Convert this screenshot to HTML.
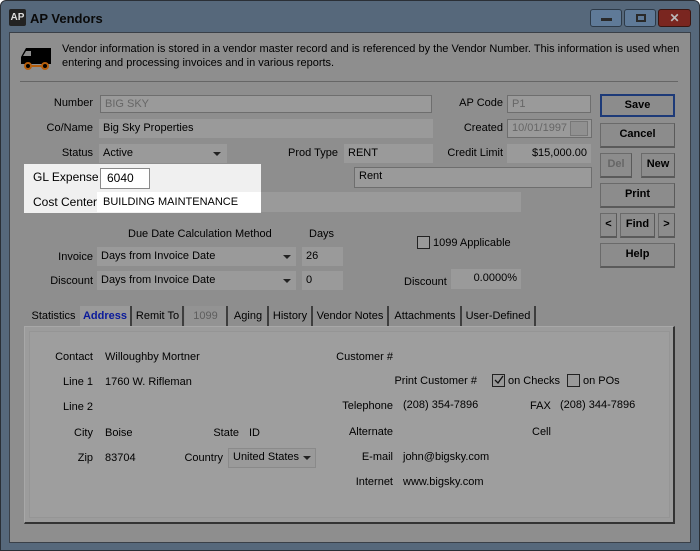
<!DOCTYPE html>
<html><head><meta charset="utf-8"><style>
*{margin:0;padding:0;box-sizing:border-box}
body{width:700px;height:551px;overflow:hidden;background:#fff;font-family:"Liberation Sans",sans-serif;font-size:11px;color:#000;position:relative}
div,span{position:absolute}
.frame{left:0;top:0;width:700px;height:551px;background:#56687b;border:1px solid #2a2f36;border-radius:6px 6px 0 0}
.content{left:9px;top:32px;width:682px;height:511px;background:#8e8e8e;border:1px solid #3a4048}
.l{white-space:nowrap;line-height:13px}
.r{text-align:right}
.f{background:#9a9a9a;height:19px;line-height:19px;padding-left:4px;white-space:nowrap}
.b{border:1px solid #6e6e6e;line-height:17px}
.btn{background:#8c8c8c;border:1px solid #6a6a6a;border-right-color:#5a5a5a;border-bottom:2px solid #5a5a5a;text-align:center;font-weight:bold;line-height:21px}
.arr{width:0;height:0;border-left:4px solid transparent;border-right:4px solid transparent;border-top:4px solid #222}
.tab{top:306px;height:20px;line-height:21px;text-align:center;border-right:2px solid #3e3e3e;white-space:nowrap}
.cb{width:13px;height:13px;border:1px solid #222;background:#9a9a9a}
</style></head><body>
<div class="frame"></div>
<div style="left:9px;top:9px;width:17px;height:17px;background:#222;border-radius:2px;color:#ddd;font-weight:bold;font-size:10px;line-height:17px;text-align:center">AP</div>
<div class="l" style="left:30px;top:12px;font-size:13px;font-weight:bold;color:#0a0a0a">AP Vendors</div>
<div style="left:590px;top:9px;width:32px;height:18px;background:#5f7a98;border:1px solid #2d3a48;border-radius:3px"><span style="left:10px;top:8px;width:11px;height:3px;background:#2a2a2a"></span></div>
<div style="left:624px;top:9px;width:32px;height:18px;background:#5f7a98;border:1px solid #2d3a48;border-radius:3px"><span style="left:11px;top:4px;width:10px;height:8px;border:2px solid #2a2a2a"></span></div>
<div style="left:658px;top:9px;width:33px;height:18px;background:#7a2620;border:1px solid #3a1510;border-radius:3px;color:#bbb;font-weight:bold;font-size:12px;text-align:center;line-height:16px">✕</div>
<div class="content"></div>
<svg style="position:absolute;left:19px;top:46px" width="34" height="26" viewBox="0 0 34 26"><path d="M12 2h20v16H2v-7l5-9z" fill="#000"/><path d="M7 5h5v5H4z" fill="#8e8e8e"/><circle cx="9" cy="20" r="3" fill="#000" stroke="#b55e0c" stroke-width="2"/><circle cx="26" cy="20" r="3" fill="#000" stroke="#b55e0c" stroke-width="2"/><path d="M13 20h9" stroke="#b55e0c" stroke-width="2"/></svg>
<div class="l" style="left:62px;top:43px;font-size:11px">Vendor information is stored in a vendor master record and is referenced by the Vendor Number. This information is used when</div>
<div class="l" style="left:62px;top:57px;font-size:11px">entering and processing invoices and in various reports.</div>
<div style="left:20px;top:81px;width:658px;height:1px;background:#666"></div>
<div class="l r" style="left:20px;width:73px;top:97px">Number</div>
<div class="f b" style="left:100px;top:95px;width:332px;height:18px;color:#666">BIG SKY</div>
<div class="l r" style="left:20px;width:73px;top:122px">Co/Name</div>
<div class="f" style="left:99px;top:119px;width:334px">Big Sky Properties</div>
<div class="l r" style="left:20px;width:73px;top:147px">Status</div>
<div class="f" style="left:99px;top:144px;width:128px">Active<span class="arr" style="left:114px;top:8px"></span></div>
<div class="l r" style="left:260px;width:78px;top:147px">Prod Type</div>
<div class="f" style="left:344px;top:144px;width:89px">RENT</div>
<div class="f b" style="left:354px;top:167px;width:238px;height:21px">Rent</div>
<div class="f" style="left:261px;top:192px;width:260px;height:20px"></div>
<div class="l r" style="left:440px;width:63px;top:97px">AP Code</div>
<div class="f b" style="left:507px;top:95px;width:84px;height:18px;color:#666">P1</div>
<div class="l r" style="left:440px;width:63px;top:122px">Created</div>
<div class="f b" style="left:507px;top:119px;width:85px;color:#666">10/01/1997<span style="left:62px;top:1px;width:18px;height:15px;background:#909090;border:1px solid #777"></span></div>
<div class="l r" style="left:430px;width:73px;top:147px">Credit Limit</div>
<div class="f" style="left:507px;top:144px;width:84px;text-align:right;padding-right:4px">$15,000.00</div>
<div style="left:24px;top:164px;width:237px;height:49px;background:#f0f0f0"></div>
<div class="l" style="left:33px;top:171px;font-size:12px">GL Expense</div>
<div style="left:100px;top:168px;width:50px;height:21px;background:#fff;border:1px solid #8a8a8a;line-height:19px;padding-left:6px;font-size:12px">6040</div>
<div class="l" style="left:33px;top:196px;font-size:12px">Cost Center</div>
<div style="left:97px;top:192px;width:164px;height:20px;background:#fff;line-height:20px;padding-left:6px;font-size:11px;white-space:nowrap">BUILDING MAINTENANCE</div>
<div class="btn" style="left:600px;top:94px;width:75px;height:23px;border:2px solid #1d3a78;line-height:19px">Save</div>
<div class="btn" style="left:600px;top:123px;width:75px;height:25px">Cancel</div>
<div class="btn" style="left:600px;top:153px;width:32px;height:25px;color:#666">Del</div>
<div class="btn" style="left:641px;top:153px;width:34px;height:25px">New</div>
<div class="btn" style="left:600px;top:183px;width:75px;height:25px">Print</div>
<div class="btn" style="left:600px;top:213px;width:17px;height:25px">&lt;</div>
<div class="btn" style="left:620px;top:213px;width:35px;height:25px">Find</div>
<div class="btn" style="left:658px;top:213px;width:17px;height:25px">&gt;</div>
<div class="btn" style="left:600px;top:243px;width:75px;height:25px">Help</div>
<div class="l" style="left:128px;top:228px">Due Date Calculation Method</div>
<div class="l" style="left:309px;top:228px">Days</div>
<div class="l r" style="left:20px;width:73px;top:251px">Invoice</div>
<div class="f" style="left:97px;top:247px;width:199px">Days from Invoice Date<span class="arr" style="left:186px;top:8px"></span></div>
<div class="f" style="left:302px;top:247px;width:41px">26</div>
<div class="l r" style="left:20px;width:73px;top:275px">Discount</div>
<div class="f" style="left:97px;top:271px;width:199px">Days from Invoice Date<span class="arr" style="left:186px;top:8px"></span></div>
<div class="f" style="left:302px;top:271px;width:41px">0</div>
<div class="cb" style="left:417px;top:236px"></div>
<div class="l" style="left:433px;top:237px">1099 Applicable</div>
<div class="l" style="left:404px;top:276px">Discount</div>
<div class="f" style="left:451px;top:269px;width:70px;height:20px;text-align:right;padding-right:4px">0.0000%</div>
<div class="tab" style="left:28px;width:51px;border-right:none">Statistics</div>
<div class="tab" style="left:80px;width:52px;background:#9a9a9a;color:#0a1a9a;font-weight:bold">Address</div>
<div class="tab" style="left:133px;width:51px">Remit To</div>
<div class="tab" style="left:185px;width:43px;color:#5e5e5e;background:#939393">1099</div>
<div class="tab" style="left:229px;width:40px">Aging</div>
<div class="tab" style="left:269px;width:44px">History</div>
<div class="tab" style="left:313px;width:76px">Vendor Notes</div>
<div class="tab" style="left:390px;width:72px">Attachments</div>
<div class="tab" style="left:462px;width:74px">User-Defined</div>
<div style="left:24px;top:326px;width:651px;height:198px;background:#9c9c9c;border:1px solid #a8a8a8;border-right:2px solid #333;border-bottom:2px solid #333"></div>
<div style="left:29px;top:331px;width:641px;height:187px;background:#9e9e9e;border:1px solid #959595"></div>
<div class="l r" style="left:20px;width:73px;top:351px">Contact</div>
<div class="l" style="left:105px;top:351px">Willoughby Mortner</div>
<div class="l r" style="left:20px;width:73px;top:376px">Line 1</div>
<div class="l" style="left:105px;top:376px">1760 W. Rifleman</div>
<div class="l r" style="left:20px;width:73px;top:401px">Line 2</div>
<div class="l r" style="left:20px;width:73px;top:427px">City</div>
<div class="l" style="left:105px;top:427px">Boise</div>
<div class="l r" style="left:20px;width:73px;top:452px">Zip</div>
<div class="l" style="left:105px;top:452px">83704</div>
<div class="l r" style="left:180px;width:59px;top:427px">State</div>
<div class="l" style="left:249px;top:427px">ID</div>
<div class="l r" style="left:160px;width:63px;top:452px">Country</div>
<div class="f b" style="left:228px;top:448px;width:88px;height:20px;border-color:#8a8a8a">United States<span class="arr" style="left:74px;top:7px"></span></div>
<div class="l r" style="left:320px;width:73px;top:351px">Customer #</div>
<div class="l r" style="left:370px;width:107px;top:375px">Print Customer #</div>
<div class="cb" style="left:492px;top:374px"><svg style="position:absolute;left:0;top:0" width="11" height="11"><path d="M2 5l3 3 5-7" stroke="#111" stroke-width="1.3" fill="none"/></svg></div>
<div class="l" style="left:508px;top:375px">on Checks</div>
<div class="cb" style="left:567px;top:374px"></div>
<div class="l" style="left:583px;top:375px">on POs</div>
<div class="l r" style="left:320px;width:73px;top:400px">Telephone</div>
<div class="l" style="left:403px;top:399px">(208) 354-7896</div>
<div class="l" style="left:530px;top:400px">FAX</div>
<div class="l" style="left:560px;top:399px">(208) 344-7896</div>
<div class="l r" style="left:320px;width:73px;top:426px">Alternate</div>
<div class="l" style="left:532px;top:426px">Cell</div>
<div class="l r" style="left:320px;width:73px;top:451px">E-mail</div>
<div class="l" style="left:403px;top:451px">john@bigsky.com</div>
<div class="l r" style="left:320px;width:73px;top:476px">Internet</div>
<div class="l" style="left:403px;top:476px">www.bigsky.com</div>
</body></html>
